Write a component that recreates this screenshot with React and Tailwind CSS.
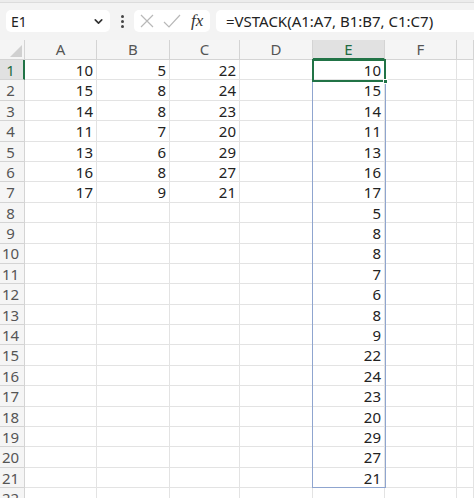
import { ChevronDown } from 'lucide-react'

const colA = [10, 15, 14, 11, 13, 16, 17]
const colB = [5, 8, 8, 7, 6, 8, 9]
const colC = [22, 24, 23, 20, 29, 27, 21]
const colE = [...colA, ...colB, ...colC]

const letters = ['A', 'B', 'C', 'D', 'E', 'F', '']

function Cell({ value }) {
  return (
    <div className="flex h-[20.4px] items-center justify-end border-b border-r border-[#e3e3e3] pr-[3px] pt-[1px] text-[15px] text-[#222]">
      {value ?? ''}
    </div>
  )
}

export default function App() {
  const rows = Array.from({ length: 22 }, (_, i) => i + 1)

  return (
    <div className="h-[498px] w-[474px] overflow-hidden bg-white" style={{ fontFamily: '"Noto Sans", "Open Sans", sans-serif' }}>
      {/* formula bar */}
      <div className="h-[40px] bg-[#f3f3f3]">
        <div className="h-[3px] border-b border-[#dcdcdc] bg-[#ececec]" />
        <div className="flex items-center pt-[7px]">
          <div className="ml-[6px] flex h-[22px] w-[104px] items-center justify-between rounded-[5px] bg-white pl-[5px] pr-[5px] text-[14px] text-[#222]">
            <span>E1</span>
            <ChevronDown className="h-[13px] w-[13px] text-[#333]" strokeWidth={3} />
          </div>
          <div className="flex w-[24px] flex-col items-center gap-[2px]">
            <span className="h-[3px] w-[3px] rounded-full bg-[#444]" />
            <span className="h-[3px] w-[3px] rounded-full bg-[#444]" />
            <span className="h-[3px] w-[3px] rounded-full bg-[#444]" />
          </div>
          <div className="flex h-[22px] w-[76px] items-center rounded-[5px] bg-white pl-[6px]">
            <svg width="14" height="14" viewBox="0 0 14 14" fill="none" stroke="#b8b8b8" strokeWidth="1.2">
              <path d="M1 1L13 13M13 1L1 13" />
            </svg>
            <svg className="ml-[9px]" width="18" height="14" viewBox="0 0 18 14" fill="none" stroke="#b8b8b8" strokeWidth="1.2">
              <path d="M1 8L6 13L17 1" />
            </svg>
            <span className="ml-[10px] text-[17px] italic text-[#333]" style={{ fontFamily: '"Liberation Serif", serif' }}>
              fx
            </span>
          </div>
          <div className="ml-[6px] flex h-[22px] flex-1 items-center rounded-l-[5px] bg-white pl-[10px] text-[15px] text-[#222]">
            =VSTACK(A1:A7, B1:B7, C1:C7)
          </div>
        </div>
      </div>

      {/* sheet */}
      <div className="relative">
        <div className="grid grid-cols-[25px_72px_73px_70px_73px_72px_72px_1fr]">
          <div className="relative h-[20px] border-b border-r border-[#d4d4d4] bg-[#f5f5f5]">
            <div className="absolute bottom-[2px] right-[2px] h-0 w-0 border-b-[12px] border-l-[12px] border-b-[#d0d0d0] border-l-transparent" />
          </div>
          {letters.map((l, i) => (
            <div
              key={i}
              className={
                l === 'E'
                  ? 'flex h-[20px] items-center justify-center border-b-2 border-r border-b-[#217346] border-r-[#d4d4d4] bg-[#e1e1e1] text-[15px] text-[#1e6b41]'
                  : 'flex h-[20px] items-center justify-center border-b border-r border-[#d4d4d4] bg-[#f5f5f5] text-[15px] text-[#555]'
              }
            >
              {l}
            </div>
          ))}

          {rows.map((r) => (
            <div key={r} className="contents">
              <div
                className={
                  r === 1
                    ? 'flex h-[20.4px] items-center justify-center border-b border-r-2 border-b-[#d4d4d4] border-r-[#217346] bg-[#e1e1e1] pr-[2px] pt-[1px] text-[15px] text-[#1e6b41]'
                    : 'flex h-[20.4px] items-center justify-center border-b border-r border-[#d4d4d4] bg-[#f5f5f5] pr-[3px] pt-[1px] text-[15px] text-[#555]'
                }
              >
                {r}
              </div>
              <Cell value={colA[r - 1]} />
              <Cell value={colB[r - 1]} />
              <Cell value={colC[r - 1]} />
              <Cell />
              <Cell value={colE[r - 1]} />
              <Cell />
              <Cell />
            </div>
          ))}
        </div>

        {/* spill range */}
        <div className="pointer-events-none absolute left-[312px] top-[20px] h-[428px] w-[74px] border border-[#8fa5cf]" />
        {/* active cell */}
        <div className="pointer-events-none absolute left-[312px] top-[19px] h-[23px] w-[74px] border-2 border-[#217346]" />
        <div className="pointer-events-none absolute left-[383px] top-[39px] h-[5px] w-[5px] border border-white bg-[#217346]" />
      </div>
    </div>
  )
}
